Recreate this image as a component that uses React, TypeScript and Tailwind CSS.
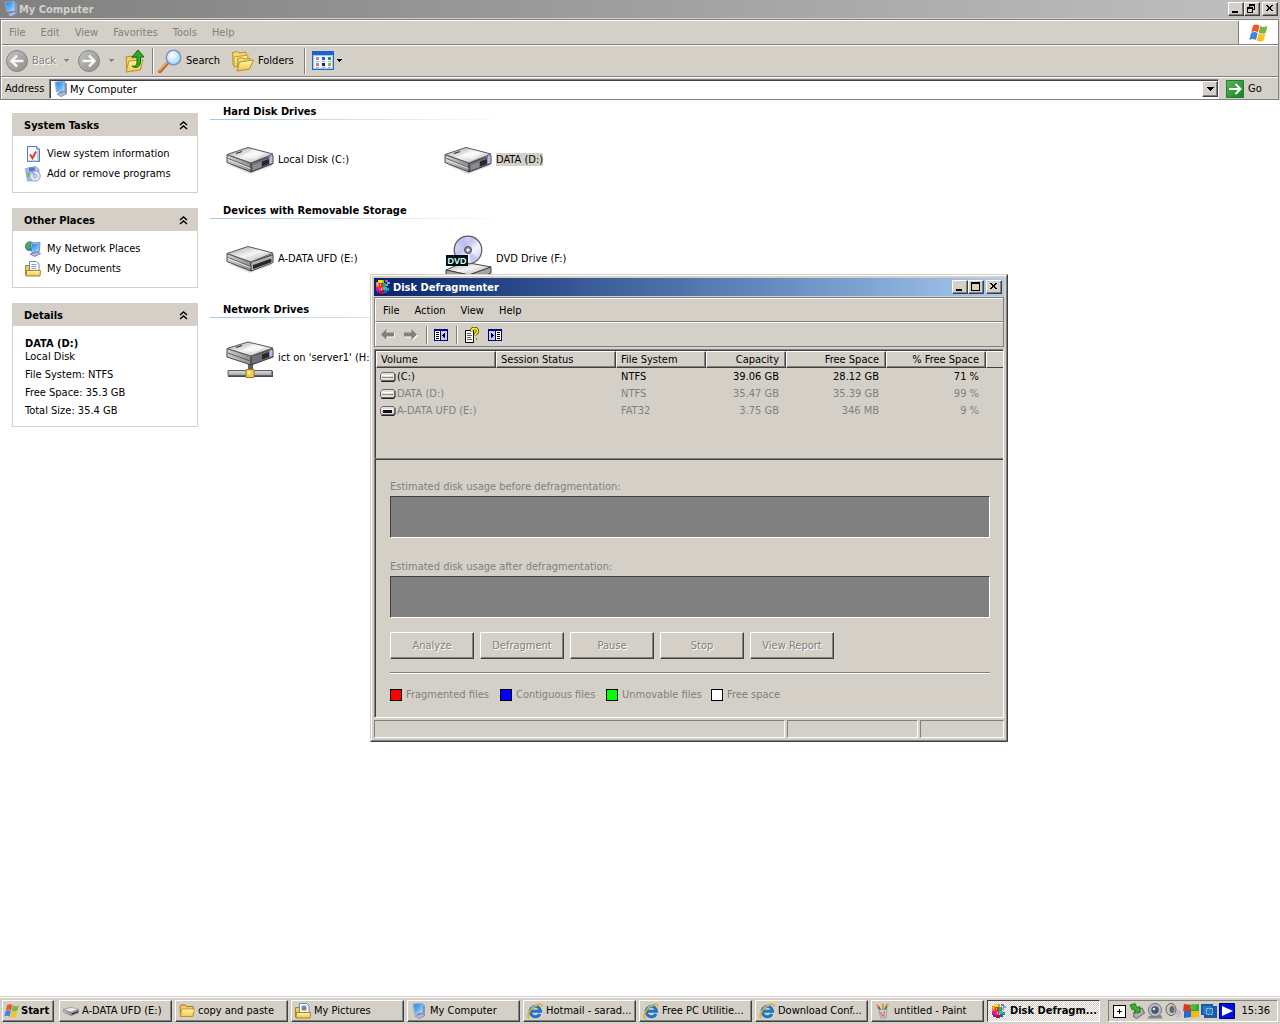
import React from "react";
import clsx from "clsx";

const raised =
  "border border-t-white border-l-white border-b-[#404040] border-r-[#404040] bg-[#d4d0c8] shadow-[inset_-1px_-1px_0_#808080]";
const sunken = "border border-t-[#808080] border-l-[#808080] border-b-white border-r-white";
const disabledText = "text-[#808080] [text-shadow:1px_1px_0_#fff]";

interface IconProps {
  className?: string;
}

const Gradients = () => (
  <svg className="absolute h-0 w-0" aria-hidden="true">
    <defs>
      <linearGradient id="driveTop" x1="0" y1="0" x2="1" y2="1">
        <stop offset="0" stopColor="#a0a0a0" />
        <stop offset="0.5" stopColor="#f4f4f4" />
        <stop offset="1" stopColor="#a8a8a8" />
      </linearGradient>
      <linearGradient id="driveSide" x1="0" y1="0" x2="1" y2="0">
        <stop offset="0" stopColor="#d0d0d0" />
        <stop offset="1" stopColor="#8c8c8c" />
      </linearGradient>
      <linearGradient id="screen" x1="0" y1="0" x2="1" y2="1">
        <stop offset="0" stopColor="#2c7cdc" />
        <stop offset="0.6" stopColor="#60b4f8" />
        <stop offset="1" stopColor="#b4e0ff" />
      </linearGradient>
      <linearGradient id="folder" x1="0" y1="0" x2="0" y2="1">
        <stop offset="0" stopColor="#fff6b0" />
        <stop offset="1" stopColor="#f0c648" />
      </linearGradient>
      <linearGradient id="disc" x1="0" y1="0" x2="1" y2="1">
        <stop offset="0" stopColor="#e4e4f4" />
        <stop offset="0.4" stopColor="#c4c4f0" />
        <stop offset="0.6" stopColor="#f4f4ff" />
        <stop offset="1" stopColor="#c8c0e4" />
      </linearGradient>
      <linearGradient id="nav" x1="0" y1="0" x2="1" y2="1">
        <stop offset="0" stopColor="#c4c4c4" />
        <stop offset="1" stopColor="#8c8c8c" />
      </linearGradient>
      <linearGradient id="go" x1="0" y1="0" x2="1" y2="1">
        <stop offset="0" stopColor="#58b858" />
        <stop offset="1" stopColor="#148020" />
      </linearGradient>
      <radialGradient id="lens" cx="0.4" cy="0.35" r="0.7">
        <stop offset="0" stopColor="#ffffff" />
        <stop offset="1" stopColor="#a0d4fc" />
      </radialGradient>
    </defs>
  </svg>
);

const ComputerIcon = ({ className = "h-4 w-4" }: IconProps) => (
  <svg viewBox="0 0 16 16" className={clsx("shrink-0", className)} aria-hidden="true">
    <path d="M11 1l3 1.500v10L11.500 14z" fill="#8c98b8" />
    <path d="M2 1L11.500 0l.5 10L3.500 11z" fill="#b4ccf4" stroke="#7088bc" strokeWidth="0.600" />
    <path d="M3 1.500l7.500-.7.500 8.200-7 1z" fill="url(#screen)" />
    <path d="M6 11l4-1 1 2-4 1z" fill="#7080a4" />
    <path d="M4 13l7-2.500 3 2L8 15.700z" fill="#b0b8d4" stroke="#6878a0" strokeWidth="0.600" />
  </svg>
);

const FlagIcon = ({ className = "h-4 w-4" }: IconProps) => (
  <svg viewBox="0 0 20 20" className={clsx("shrink-0", className)} aria-hidden="true">
    <path d="M4 2.500c2-1.300 4-1.300 6.500 0L9 9.300C6.500 8 4.500 8 2.300 9.300z" fill="#ec5828" />
    <path d="M11.200 3c2.500 1.300 4.500 1.300 7.300 0l-1.700 6.800c-2.500 1.300-4.800 1.300-7.100 0z" fill="#78b83c" />
    <path d="M2 10c2.300-1.300 4.300-1.300 6.700 0L7 17c-2.500-1.300-4.500-1.300-6.700 0z" fill="#4484e0" />
    <path d="M9.500 10.500c2.500 1.300 4.500 1.300 7 0l-1.700 7c-2.500 1.300-4.800 1.300-7 0z" fill="#f8c020" />
  </svg>
);

const FolderIcon = ({ className = "h-4 w-4" }: IconProps) => (
  <svg viewBox="0 0 16 16" className={clsx("shrink-0", className)} aria-hidden="true">
    <path d="M1 3.500l1-1.500h4l1.500 1.500H14V13H1.500z" fill="#f0cc58" stroke="#a87c14" />
    <path d="M3 6h12.500l-1.700 7.500H1.200z" fill="url(#folder)" stroke="#b88c1c" strokeWidth="0.800" />
  </svg>
);

const PicturesIcon = ({ documents = false }: { documents?: boolean }) => (
  <svg viewBox="0 0 16 16" className="h-4 w-4 shrink-0" aria-hidden="true">
    <path d="M.5 4.500h5V14h-5z" fill="#f0c858" stroke="#a8802c" />
    <path d="M4.500.5h7L14 3v9H4.500z" fill="#fff" stroke="#7088b8" />
    {documents ? (
      <path d="M6.500 3.500h5m-5 2h5m-5 2h5" stroke="#88a0d0" />
    ) : (
      <>
        <path d="M6.500 2.500h5v5h-5z" fill="#58a8e8" />
        <circle cx="9" cy="5.500" r="1.700" fill="#e05838" />
      </>
    )}
    <path d="M1.500 9.500H15.500L15 15H1z" fill="url(#folder)" stroke="#a8802c" />
  </svg>
);

const ExplorerIcon = () => (
  <svg viewBox="0 0 16 16" className="h-4 w-4 shrink-0" aria-hidden="true">
    <path
      d="M13 11A5.200 5.200 0 1 1 13.600 8.300H4.500"
      fill="none"
      stroke="#1c74c8"
      strokeWidth="3"
    />
    <path d="M4.200 6A4.800 4.800 0 0 1 10 3.500" fill="none" stroke="#68bcf4" strokeWidth="1.200" />
    <path
      d="M3 15C-.5 15 1 9.500 5.500 5S15.500 0 14.800 3.500"
      fill="none"
      stroke="#e8b020"
      strokeWidth="1.700"
    />
  </svg>
);

const PaintIcon = () => (
  <svg viewBox="0 0 16 16" className="h-4 w-4 shrink-0" aria-hidden="true">
    <path d="M6 8L2.500 2.500" stroke="#c03c28" strokeWidth="2" />
    <path d="M8 8V1" stroke="#d89c2c" strokeWidth="2" />
    <path d="M9.500 8l3-6.500" stroke="#308c40" strokeWidth="2" />
    <path d="M1.500 1.500l2 2M12 3.500l1.500-3" stroke="#e8a070" strokeWidth="1.800" />
    <path d="M4 6.500h8L11 15H5.500z" fill="#c8d4dc" stroke="#8494a0" strokeWidth="0.800" />
    <path d="M5.500 9l2 4m2-5l-1 6" stroke="#e46848" strokeWidth="1.300" />
  </svg>
);

const DefragIcon = () => (
  <svg viewBox="0 0 16 16" className="h-4 w-4 shrink-0" shapeRendering="crispEdges" aria-hidden="true">
    <path d="M3 1h4v3H3z" fill="#f4e020" />
    <path d="M1 3h3v5H1z" fill="#f08018" />
    <path d="M7 1h2v3H7z" fill="#78d028" />
    <path d="M4 4h4v4H4z" fill="#e82828" />
    <path d="M1 8h3v4H1z" fill="#d818a0" />
    <path d="M2 11h3v3H2z" fill="#7c20c8" />
    <path d="M4 8h4v4H4z" fill="#f83848" />
    <path d="M8 4h3v4H8z" fill="#18b848" />
    <path d="M8 8h4v3H8z" fill="#18c8c8" />
    <path d="M5 12h4v3H5z" fill="#c01028" />
    <path d="M9 11h3v3H9z" fill="#3050f0" />
    <path d="M12 9h2v3h-2z" fill="#20a848" />
    <path d="M10 1h3v2h-3z" fill="#e83cc8" />
    <path d="M12 3h3v2h-3z" fill="#48b8f8" />
    <path d="M11 5h2v2h-2z" fill="#c878f8" />
    <path d="M2 4h1v2H2zM5 5h1v2H5zM6 9h1v2H6z" fill="#fff" opacity="0.600" />
  </svg>
);

const SysInfoIcon = () => (
  <svg viewBox="0 0 16 16" className="h-4 w-4 shrink-0" aria-hidden="true">
    <path d="M2.500.5h9L14.500 3v12.500h-12z" fill="#f4f8ff" stroke="#5878b0" />
    <path d="M13 3v12H3" fill="none" stroke="#90acdc" />
    <path d="M11.500.5V3h3" fill="#c0d4f4" stroke="#5878b0" strokeWidth="0.800" />
    <path d="M5 8.500l2.500 3.500L11 5.500" fill="none" stroke="#e03c20" strokeWidth="2" />
  </svg>
);

const ProgramsIcon = () => (
  <svg viewBox="0 0 16 16" className="h-4 w-4 shrink-0" aria-hidden="true">
    <path d="M.5 2.500L11 .5l3 3L13 14 2.500 15z" fill="#b4c4e0" stroke="#7c90b8" strokeWidth="0.800" />
    <path d="M4 1.500h6v4H4z" fill="#3c84d0" />
    <path d="M2 5l3 3-2 5z" fill="#68b850" />
    <circle cx="10" cy="10" r="5.300" fill="#dce4f8" stroke="#8894b8" strokeWidth="0.800" />
    <path d="M10 10L6 7a5 5 0 0 1 3-2z" fill="#a8a4f0" />
    <circle cx="10" cy="10" r="1.500" fill="#fff" stroke="#7884a0" strokeWidth="0.800" />
  </svg>
);

const NetworkIcon = () => (
  <svg viewBox="0 0 16 16" className="h-4 w-4 shrink-0" aria-hidden="true">
    <circle cx="4.800" cy="5.300" r="4.800" fill="#3070d0" />
    <path d="M1 3c1-2 4-3 5-2L5 4l1 2-2 3C2 8 .5 6 1 3z" fill="#48b040" />
    <path d="M5.500 2l9.500-.5-.7 9L7 11.500z" fill="#c4d8f8" stroke="#5870b0" strokeWidth="0.800" />
    <path d="M6.500 3l7.700-.6-.6 7.300L7.800 10.500z" fill="url(#screen)" />
    <path d="M5 13l7-2 3.500 1.500-6 3z" fill="#b4bcd4" stroke="#6070a0" strokeWidth="0.800" />
  </svg>
);

const HardDrive = ({ className = "h-12 w-12", usb = false }: IconProps & { usb?: boolean }) => (
  <svg viewBox="0 0 48 48" className={clsx("shrink-0", className)} aria-hidden="true">
    <path d="M3 30l21 9 22-8v-3z" fill="#000" opacity="0.150" />
    <path d="M1 19.500L25 28v9L1 27.500z" fill="url(#driveSide)" stroke="#484848" />
    <path d="M25 28l22-7.500v8L25 37z" fill="#707078" stroke="#383838" />
    <path d="M1 19.500L22 12.500l25 6.500-22 9z" fill="url(#driveTop)" stroke="#585858" />
    <path d="M2 23.500l22.500 9" stroke="#606060" />
    <path d="M2 24.500l22.500 9" stroke="#f4f4f4" strokeWidth="0.800" />
    {usb ? (
      <>
        <path d="M25.500 28.500l21-7v7l-21 8z" fill="#b0b0b0" />
        <path d="M27 31l17-6c2-.5 2 3 0 3.800L27 35z" fill="#282828" />
      </>
    ) : (
      <>
        <path d="M36 26.500l7-2.500v5l-7 2.500z" fill="#282828" />
        <path d="M43.500 21.500l3-1v7.500l-3 1z" fill="#b8b8ec" />
        <path d="M27 30l8-3v5l-8 3z" fill="#8c8c94" />
        <path d="M10 18.500l6-2" stroke="#303030" strokeWidth="1.200" />
        <path d="M16 20.500l11-6 12 4-11 6z" fill="#fff" opacity="0.500" />
      </>
    )}
  </svg>
);

const NetworkDrive = () => (
  <svg viewBox="0 0 48 48" className="h-12 w-12 shrink-0" aria-hidden="true">
    <path d="M22 29h5v9h-5z" fill="#606060" />
    <path d="M2 38h45v6H2z" fill="#484848" />
    <path d="M2 37.500h44v5H2z" fill="#b0b4bc" stroke="#606060" />
    <path d="M3 39h42" stroke="#e8ecf0" />
    <path d="M20 36.500h8v8h-8z" fill="#f4cc50" stroke="#a87818" />
    <path d="M21.500 38h3v3h-3z" fill="#fff0a8" />
    <path d="M1 15.500L25 23v9L1 24z" fill="url(#driveSide)" stroke="#484848" />
    <path d="M25 23l22-7v8l-22 8z" fill="#707078" stroke="#383838" />
    <path d="M1 15.500L22 9l25 6-22 8z" fill="url(#driveTop)" stroke="#585858" />
    <path d="M2 20l22.500 8" stroke="#606060" />
    <path d="M36 21.500l7-2.500v5l-7 2.500z" fill="#282828" />
    <path d="M43.500 17.500l3-1V23l-3 1z" fill="#b8b8ec" />
    <path d="M10 14.500l6-2" stroke="#303030" strokeWidth="1.200" />
    <path d="M17 16.500l10-5.500 12 3.500-11 5.500z" fill="#fff" opacity="0.500" />
  </svg>
);

const DvdDrive = () => (
  <svg viewBox="0 0 48 48" className="h-12 w-12 shrink-0" aria-hidden="true">
    <path d="M2 36l18-8 27 5-22 8z" fill="url(#driveTop)" stroke="#484848" />
    <path d="M2 36l23 5v6L2 43zM25 41l22-8v6l-22 8z" fill="#a4a4a4" stroke="#404040" />
    <circle cx="24" cy="16" r="13.800" fill="url(#disc)" stroke="#585858" strokeWidth="1.200" />
    <path d="M24 16L13 9a13 13 0 0 1 9-6zM24 16l10 8a13 13 0 0 1-7 5z" fill="#b8b4f8" opacity="0.600" />
    <circle cx="24" cy="16" r="3.500" fill="#888898" stroke="#484858" />
    <circle cx="24" cy="16" r="1.500" fill="#fff" />
    <path d="M2 21h22v11H2z" fill="#001010" />
    <text x="13" y="30" textAnchor="middle" fontSize="9" fontWeight="bold" fill="#d8ffff" fontFamily="Liberation Sans, sans-serif">
      DVD
    </text>
  </svg>
);

const NavIcon = ({ forward = false }: { forward?: boolean }) => (
  <svg viewBox="0 0 24 24" className="h-6 w-6 shrink-0" aria-hidden="true">
    <circle cx="12" cy="12" r="10.500" fill="url(#nav)" stroke="#848484" />
    <path
      d={forward ? "M5.500 12h11M12 6.500l5.500 5.500-5.500 5.500" : "M18.500 12h-11M12 6.500L6.500 12l5.500 5.500"}
      fill="none"
      stroke="#f4f4f0"
      strokeWidth="2.500"
    />
  </svg>
);

const UpIcon = () => (
  <svg viewBox="0 0 22 24" className="h-6 w-[22px] shrink-0" aria-hidden="true">
    <path d="M2 8l5-1 1 2 8-1 1 12-14 2z" fill="#f0d060" stroke="#b08c28" />
    <path d="M5 12l14-1-3 10-14 2z" fill="url(#folder)" stroke="#b8942c" />
    <path d="M8 17c3 1 5-1 5-4V8H8L14 1l6 7h-3.500v5c0 5-5 7-8.500 4z" fill="#30a828" stroke="#146c14" />
  </svg>
);

const SearchIcon = () => (
  <svg viewBox="0 0 24 24" className="h-6 w-6 shrink-0" aria-hidden="true">
    <path d="M1.800 22.500L9 14.500" stroke="#b46428" strokeWidth="3.500" strokeLinecap="round" />
    <path d="M1.500 21.500L8.500 14" stroke="#f8a860" strokeWidth="1.800" strokeLinecap="round" />
    <circle cx="15.500" cy="8.500" r="7.200" fill="url(#lens)" stroke="#7898c8" strokeWidth="1.600" />
  </svg>
);

const FoldersIcon = () => (
  <svg viewBox="0 0 24 24" className="h-6 w-6 shrink-0" aria-hidden="true">
    <path d="M1.500 3.500l5-1L8 4l7-1v11l-13 2z" fill="#f4d870" stroke="#b8942c" />
    <path d="M3 8l14-2-1 9-13 3z" fill="url(#folder)" stroke="#c09c34" />
    <path d="M6.500 9.500l5-1L13 10l6-.5v10l-12 2z" fill="#f4d870" stroke="#b8942c" />
    <path d="M8.500 13l14-2-4 9-12.500 2z" fill="url(#folder)" stroke="#b8942c" />
  </svg>
);

const ViewsIcon = () => (
  <svg viewBox="0 0 24 20" className="h-5 w-6 shrink-0" shapeRendering="crispEdges" aria-hidden="true">
    <path d="M1.500.5h21v18h-21z" fill="#f4f8ff" stroke="#2068c0" />
    <path d="M2.500 4.500h19v13h-19z" fill="none" stroke="#a8c8f0" />
    <path d="M1 0h22v4H1z" fill="#1c64cc" />
    <path d="M5 6h3v3H5z" fill="#a090c8" />
    <path d="M11 6h3v3h-3z" fill="#2060d8" />
    <path d="M17 6h3v3h-3z" fill="#309830" />
    <path d="M5 12h3v3H5z" fill="#e08060" />
    <path d="M11 12h3v3h-3z" fill="#102870" />
    <path d="M17 12h3v3h-3z" fill="#c0a028" />
    <path d="M5 10.500h3M11 10.500h3M17 10.500h3M5 16.500h3M11 16.500h3M17 16.500h3" stroke="#90b0d8" />
  </svg>
);

const Caret = ({ className = "text-black" }: IconProps) => (
  <svg viewBox="0 0 7 4" className={clsx("h-1 w-[7px] shrink-0", className)} shapeRendering="crispEdges" aria-hidden="true">
    <path d="M0 0h7v1H0zM1 1h5v1H1zM2 2h3v1H2zM3 3h1v1H3z" fill="currentColor" />
  </svg>
);

const SmallCaret = ({ className = "text-black" }: IconProps) => (
  <svg viewBox="0 0 6 4" className={clsx("h-1 w-[6px] shrink-0", className)} shapeRendering="crispEdges" aria-hidden="true">
    <path d="M0 0h5v1H0zM1 1h3v1H1zM2 2h1v1H2z" fill="currentColor" />
  </svg>
);

const glyphs = {
  minimize: "M3 8h6v2H3z",
  maximize: "M2 1h9v9H2zM3 3v6h7V3z",
  restore: "M4 1h6v6H8v3H2V4h2zM5 3v1h3v2h1V3zM3 6v3h4V6z",
  close:
    "M3 2h2v1H3zM8 2h2v1H8zM4 3h2v1H4zM7 3h2v1H7zM5 4h3v1H5zM5 5h3v1H5zM4 6h2v1H4zM7 6h2v1H7zM3 7h2v1H3zM8 7h2v1H8z",
};

const CaptionButton = ({ glyph }: { glyph: keyof typeof glyphs }) => (
  <button aria-label={glyph} className={clsx(raised, "flex h-[14px] w-4 items-center justify-center")}>
    <svg viewBox="0 0 14 12" className="h-3 w-[14px] shrink-0" shapeRendering="crispEdges" aria-hidden="true">
      <path d={glyphs[glyph]} fillRule="evenodd" />
    </svg>
  </button>
);

const Separator = ({ className }: IconProps) => (
  <div className={clsx("w-[2px] border-l border-r border-l-[#808080] border-r-white", className)} />
);

const browserMenu = ["File", "Edit", "View", "Favorites", "Tools", "Help"];

const BrowserChrome = () => (
  <header className="bg-[#d4d0c8]">
    <div className="flex h-[18px] items-center bg-linear-to-r from-[#808080] to-[#c0c0c0] pr-[2px] pl-[3px]">
      <ComputerIcon />
      <h1 className="grow pt-px text-[11px] font-bold text-[#d4d0c8]">My Computer</h1>
      <CaptionButton glyph="minimize" />
      <CaptionButton glyph="restore" />
      <div className="w-[2px]" />
      <CaptionButton glyph="close" />
    </div>
    <div className="mt-px mr-px border border-[#808080]">
      <nav className="flex h-[25px] items-stretch border-t border-l border-white">
        <div className="flex grow items-center gap-[15px] border-b border-[#808080] pl-[7px] text-[#808080]">
          {browserMenu.map((item) => (
            <button key={item}>{item}</button>
          ))}
        </div>
        <div className="flex w-10 items-center justify-center border-b border-l border-[#808080] bg-white">
          <FlagIcon className="h-5 w-5" />
        </div>
      </nav>
      <div className="flex h-8 items-center border-t border-l border-b border-t-white border-l-white border-b-[#808080] pl-[3px]">
        <button className={clsx("flex w-[50px] items-center gap-[3px]", disabledText)}>
          <NavIcon />
          Back
        </button>
        <button aria-label="Back history" className="ml-[9px]">
          <SmallCaret className="text-[#808080]" />
        </button>
        <button aria-label="Forward" className="ml-[7px]">
          <NavIcon forward />
        </button>
        <button aria-label="Forward history" className="ml-2">
          <SmallCaret className="text-[#808080]" />
        </button>
        <button aria-label="Up" className="ml-[9px]">
          <UpIcon />
        </button>
        <Separator className="ml-[6px] h-[26px]" />
        <button className="ml-1 flex w-[62px] items-center gap-1">
          <SearchIcon />
          Search
        </button>
        <button className="ml-[11px] flex w-[66px] items-center gap-[3px]">
          <FoldersIcon />
          Folders
        </button>
        <Separator className="ml-[7px] h-[26px]" />
        <button aria-label="Views" className="ml-[5px] flex items-center gap-[2px]">
          <ViewsIcon />
          <SmallCaret />
        </button>
      </div>
      <div className="flex h-[22px] items-center border-t border-l border-white pl-[3px]">
        <label htmlFor="address" className="w-[44px]">
          Address
        </label>
        <div className="flex h-5 grow items-center border border-[#808080] border-r-white border-b-white bg-white pl-[3px] shadow-[inset_1px_1px_0_#404040]">
          <ComputerIcon />
          <input id="address" defaultValue="My Computer" className="h-4 grow pt-px pl-px outline-none" />
          <button aria-label="Address history" className={clsx(raised, "mt-px flex h-4 w-4 items-center justify-center")}>
            <Caret />
          </button>
        </div>
        <button className="flex w-[59px] items-center gap-1 pl-[7px]">
          <svg viewBox="0 0 18 18" className="h-[18px] w-[18px] shrink-0" aria-hidden="true">
            <path d="M.5.5h17v17H.5z" fill="url(#go)" stroke="#287c30" />
            <path d="M3 9h11M9.500 4l5 5-5 5" fill="none" stroke="#fff" strokeWidth="2" />
          </svg>
          Go
        </button>
      </div>
    </div>
  </header>
);

interface TaskPanelProps {
  title: string;
  className?: string;
  children: React.ReactNode;
}

const TaskPanel = ({ title, className, children }: TaskPanelProps) => (
  <section className="border border-[#d4d0c8]">
    <div className="flex h-[22px] items-center justify-between bg-[#d4d0c8] pr-[9px] pl-[11px]">
      <h2 className="pt-[2px] font-bold">{title}</h2>
      <button aria-label={`Collapse ${title}`}>
        <svg viewBox="0 0 9 9" className="h-[9px] w-[9px]" aria-hidden="true">
          <path d="M1 4l3.500-3L8 4M1 8l3.500-3L8 8" fill="none" stroke="#000" strokeWidth="1.400" />
        </svg>
      </button>
    </div>
    <div className={clsx("px-3", className)}>{children}</div>
  </section>
);

interface TaskLinkProps {
  icon: React.ReactNode;
  label: string;
}

const TaskLink = ({ icon, label }: TaskLinkProps) => (
  <a href="#" className="flex h-5 items-center gap-[6px]">
    {icon}
    {label}
  </a>
);

const Sidebar = () => (
  <aside className="flex w-[186px] shrink-0 flex-col gap-[15px] pt-[13px]">
    <TaskPanel title="System Tasks" className="h-14 pt-2">
      <TaskLink icon={<SysInfoIcon />} label="View system information" />
      <TaskLink icon={<ProgramsIcon />} label="Add or remove programs" />
    </TaskPanel>
    <TaskPanel title="Other Places" className="h-14 pt-2">
      <TaskLink icon={<NetworkIcon />} label="My Network Places" />
      <TaskLink icon={<PicturesIcon documents />} label="My Documents" />
    </TaskPanel>
    <TaskPanel title="Details" className="pt-[11px] pb-[6px]">
      <p className="leading-[14px] font-bold">DATA (D:)</p>
      <p className="leading-[12px]">Local Disk</p>
      <p className="pt-[3px] leading-[18px]">File System: NTFS</p>
      <p className="leading-[18px]">Free Space: 35.3 GB</p>
      <p className="leading-[18px]">Total Size: 35.4 GB</p>
    </TaskPanel>
  </aside>
);

interface Drive {
  name: string;
  icon: React.ReactNode;
  selected?: boolean;
}

const driveGroups: { title: string; drives: Drive[] }[] = [
  {
    title: "Hard Disk Drives",
    drives: [
      { name: "Local Disk (C:)", icon: <HardDrive /> },
      { name: "DATA (D:)", icon: <HardDrive />, selected: true },
    ],
  },
  {
    title: "Devices with Removable Storage",
    drives: [
      { name: "A-DATA UFD (E:)", icon: <HardDrive usb /> },
      { name: "DVD Drive (F:)", icon: <DvdDrive /> },
    ],
  },
  {
    title: "Network Drives",
    drives: [{ name: "ict on 'server1' (H:)", icon: <NetworkDrive /> }],
  },
];

const DriveList = () => (
  <main className="grow pl-3">
    {driveGroups.map((group) => (
      <section key={group.title} className="h-[99px]">
        <h2 className="h-[19px] pt-[5px] pl-[13px] font-bold">{group.title}</h2>
        <div className="h-px w-[300px] bg-linear-to-r from-[#a0c8e4] to-white" />
        <div className="flex pt-[15px] pl-4">
          {group.drives.map((drive) => (
            <button key={drive.name} className="flex w-[218px] items-center gap-1">
              {drive.icon}
              <span className={clsx("leading-[13px]", drive.selected && "bg-[#d4d0c8]")}>{drive.name}</span>
            </button>
          ))}
        </div>
      </section>
    ))}
  </main>
);

const VolumeIcon = ({ removable = false }: { removable?: boolean }) => (
  <svg viewBox="0 0 16 10" className="h-[10px] w-4 shrink-0" aria-hidden="true">
    <path d="M2 2h13v6l-1 1.500H1.500" fill="#303030" stroke="#202020" />
    <path d="M2.500.5h11l1 1.500v5l-1 1.500h-12L.5 7V2.500z" fill="#e0e0e0" stroke="#686868" />
    <path d="M2 3.500h11" stroke="#fff" />
    {removable ? (
      <>
        <path d="M3 4h9v3H3z" fill="#101010" />
        <path d="M2 5h2v1H2z" fill="#e02020" />
      </>
    ) : (
      <>
        <path d="M2 5.500h9" stroke="#909090" />
        <path d="M11 5h2v1h-2z" fill="#20a020" />
      </>
    )}
  </svg>
);

const columns = [
  { label: "Volume", width: "w-[120px]", right: false },
  { label: "Session Status", width: "w-[120px]", right: false },
  { label: "File System", width: "w-[90px]", right: false },
  { label: "Capacity", width: "w-[80px]", right: true },
  { label: "Free Space", width: "w-[100px]", right: true },
  { label: "% Free Space", width: "w-[100px]", right: true },
  { label: "", width: "", right: false },
];

const volumes = [
  { name: "(C:)", fs: "NTFS", capacity: "39.06 GB", free: "28.12 GB", percent: "71 %", active: true },
  { name: "DATA (D:)", fs: "NTFS", capacity: "35.47 GB", free: "35.39 GB", percent: "99 %", active: false },
  { name: "A-DATA UFD (E:)", fs: "FAT32", capacity: "3.75 GB", free: "346 MB", percent: "9 %", active: false },
];

const VolumeTable = () => (
  <div className="h-[109px] border-t border-l border-[#404040]">
    <table className="w-full table-fixed border-separate border-spacing-0 text-left">
      <thead>
        <tr>
          {columns.map((col) => (
            <th
              key={col.label}
              className={clsx(
                "h-[17px] border-t border-l border-b border-t-white border-l-white border-b-[#404040] pt-px pr-[6px] pb-0 pl-1 font-normal",
                col.width,
                col.right && "text-right",
                col.label && "border-r border-r-[#404040] shadow-[inset_-1px_-1px_0_#808080]"
              )}
            >
              {col.label}
            </th>
          ))}
        </tr>
      </thead>
      <tbody>
        {volumes.map((volume) => (
          <tr key={volume.name} className={clsx("h-[17px]", !volume.active && "text-[#808080]")}>
            <td className="pt-px pb-0 pl-1">
              <span className="flex items-center gap-px whitespace-nowrap">
                <VolumeIcon removable={volume.fs === "FAT32"} />
                {volume.name}
              </span>
            </td>
            <td />
            <td className="pt-px pb-0 pl-[5px]">{volume.fs}</td>
            <td className="pt-px pr-[7px] pb-0 text-right">{volume.capacity}</td>
            <td className="pt-px pr-[7px] pb-0 text-right">{volume.free}</td>
            <td className="pt-px pr-[7px] pb-0 text-right">{volume.percent}</td>
            <td />
          </tr>
        ))}
      </tbody>
    </table>
  </div>
);

const legend = [
  { label: "Fragmented files", color: "bg-[#ff0000]", width: "w-[110px]" },
  { label: "Contiguous files", color: "bg-[#0000ff]", width: "w-[106px]" },
  { label: "Unmovable files", color: "bg-[#00ff00]", width: "w-[105px]" },
  { label: "Free space", color: "bg-white", width: "w-[105px]" },
];

const actions = ["Analyze", "Defragment", "Pause", "Stop", "View Report"];

const UsageBar = ({ label }: { label: string }) => (
  <div>
    <p className="h-4 leading-[13px] text-[#808080]">{label}</p>
    <div className="h-[42px] border border-t-[#404040] border-r-white border-b-white border-l-[#404040] bg-[#808080]" />
  </div>
);

const ConsoleToolbar = () => (
  <div className="flex h-6 items-center border-t border-l border-white pl-[5px]">
    <button aria-label="Back">
      <svg viewBox="0 0 14 11" className="h-[11px] w-[14px]" aria-hidden="true">
        <path d="M1 6.500L6.500 1v3.500H14v4H6.500V12z" fill="#fff" />
        <path d="M0 5.500L5.500 0v3.500H13v4H5.500V11z" fill="#808080" />
      </svg>
    </button>
    <button aria-label="Forward" className="ml-[9px]">
      <svg viewBox="0 0 14 11" className="h-[11px] w-[14px]" aria-hidden="true">
        <path d="M14 6.500L8.500 1v3.500H1v4h7.500V12z" fill="#fff" />
        <path d="M13 5.500L7.500 0v3.500H0v4h7.500V11z" fill="#808080" />
      </svg>
    </button>
    <Separator className="ml-2 h-[18px]" />
    <button aria-label="Console tree" className="ml-[6px]">
      <svg viewBox="0 0 14 12" className="h-3 w-[14px]" shapeRendering="crispEdges" aria-hidden="true">
        <path d="M0 0h14v12H0z" fill="#000080" />
        <path d="M1 2h5v9H1z" fill="#fff" />
        <path d="M7 2h6v9H7z" fill="#c8c8f0" />
        <path d="M2 3h3v1H2zM2 5h3v1H2zM2 7h3v1H2zM2 9h3v1H2zM11 4v5L8 6.500z" />
      </svg>
    </button>
    <Separator className="ml-2 h-[18px]" />
    <button aria-label="Help" className="ml-[6px]">
      <svg viewBox="0 0 16 16" className="h-4 w-4" aria-hidden="true">
        <path d="M1.500 3.500h8v12h-8z" fill="#fff" stroke="#000" />
        <path d="M3 6.500h4m-4 2h5m-5 2h4m-4 2h5" stroke="#606060" />
        <path d="M7.500 4.500c0-4 6-4 6-.5 0 2.500-2.500 2-2.500 4.500M11 11v2" fill="none" stroke="#303000" strokeWidth="3.200" />
        <path d="M7.500 4.500c0-4 6-4 6-.5 0 2.500-2.500 2-2.500 4.500M11 11v2" fill="none" stroke="#f8f020" strokeWidth="2" />
      </svg>
    </button>
    <button aria-label="Action pane" className="ml-2">
      <svg viewBox="0 0 14 12" className="h-3 w-[14px]" shapeRendering="crispEdges" aria-hidden="true">
        <path d="M0 0h14v12H0z" fill="#000080" />
        <path d="M1 2h6v9H1z" fill="#c8c8f0" />
        <path d="M8 2h5v9H8z" fill="#fff" />
        <path d="M9 3h3v1H9zM9 5h3v1H9zM9 7h3v1H9zM9 9h3v1H9zM3 4v5l3-2.500z" />
      </svg>
    </button>
  </div>
);

const DefragWindow = () => (
  <div
    role="dialog"
    aria-label="Disk Defragmenter"
    className="absolute top-[274px] left-[370px] w-[638px] border border-t-[#d4d0c8] border-r-[#404040] border-b-[#404040] border-l-[#d4d0c8] bg-[#d4d0c8]"
  >
    <div className="border border-t-white border-r-[#808080] border-b-[#808080] border-l-white p-[2px]">
      <div className="flex h-[18px] items-center bg-linear-to-r from-[#0a246a] to-[#a6caf0] pr-[2px] pl-px">
        <DefragIcon />
        <h2 className="grow pt-px pl-[2px] font-bold text-white">Disk Defragmenter</h2>
        <CaptionButton glyph="minimize" />
        <CaptionButton glyph="maximize" />
        <div className="w-[2px]" />
        <CaptionButton glyph="close" />
      </div>
      <div className="mt-px border border-[#808080]">
        <nav className="flex h-6 items-center gap-[15px] border-t border-l border-b border-t-white border-l-white border-b-[#808080] pt-px pl-[7px]">
          {["File", "Action", "View", "Help"].map((item) => (
            <button key={item}>{item}</button>
          ))}
        </nav>
        <ConsoleToolbar />
      </div>
      <div className="mt-[2px] border border-t-[#808080] border-r-white border-b-white border-l-[#808080]">
        <VolumeTable />
        <div className="border-t border-l border-t-[#404040] border-l-[#404040] pt-5 pr-[13px] pb-[15px] pl-[14px] shadow-[0_-1px_0_#808080]">
          <div className="flex flex-col gap-[22px]">
            <UsageBar label="Estimated disk usage before defragmentation:" />
            <UsageBar label="Estimated disk usage after defragmentation:" />
          </div>
          <div className="mt-[14px] flex gap-[6px]">
            {actions.map((action) => (
              <button key={action} disabled className={clsx(raised, disabledText, "h-[27px] w-[84px]")}>
                {action}
              </button>
            ))}
          </div>
          <div className="mt-[13px] h-[2px] border-t border-b border-t-[#808080] border-b-white" />
          <ul className="mt-[14px] flex text-[#808080]">
            {legend.map((entry) => (
              <li key={entry.label} className={clsx("flex items-center gap-1", entry.width)}>
                <span className={clsx("h-3 w-3 border border-black", entry.color)} />
                {entry.label}
              </li>
            ))}
          </ul>
        </div>
      </div>
      <div className="mt-[2px] flex h-[18px] gap-[2px]">
        <div className={clsx(sunken, "grow")} />
        <div className={clsx(sunken, "w-[131px]")} />
        <div className={clsx(sunken, "w-[84px]")} />
      </div>
    </div>
  </div>
);

const tasks = [
  { label: "A-DATA UFD (E:)", icon: <HardDrive usb className="h-4 w-4" /> },
  { label: "copy and paste", icon: <FolderIcon /> },
  { label: "My Pictures", icon: <PicturesIcon /> },
  { label: "My Computer", icon: <ComputerIcon /> },
  { label: "Hotmail - sarad...", icon: <ExplorerIcon /> },
  { label: "Free PC Utilitie...", icon: <ExplorerIcon /> },
  { label: "Download Conf...", icon: <ExplorerIcon /> },
  { label: "untitled - Paint", icon: <PaintIcon /> },
  { label: "Disk Defragm...", icon: <DefragIcon />, active: true },
];

const TrayIcons = () => (
  <div className="flex items-center gap-[2px]">
    <svg viewBox="0 0 16 16" className="h-4 w-4" shapeRendering="crispEdges" aria-hidden="true">
      <path d="M2.500 2.500h12v12h-12z" fill="#fff" stroke="#000" />
      <path d="M6 8h5v1H6zM8 6h1v5H8z" />
    </svg>
    <svg viewBox="0 0 16 16" className="h-4 w-4" aria-hidden="true">
      <path d="M5 9l8-4 2.500 5-8 5.500-3-2z" fill="#b0b0b0" stroke="#606060" />
      <path d="M1 2l5-1.500 2 4 3-1v6L5 10l2-2.500-4-1z" fill="#38b030" stroke="#186c18" strokeWidth="0.800" />
    </svg>
    <svg viewBox="0 0 16 16" className="h-4 w-4" aria-hidden="true">
      <path d="M2 13l12-1 1.500 3.500H.5z" fill="#808890" />
      <circle cx="8" cy="7" r="6.500" fill="#b8bcc8" stroke="#707480" />
      <circle cx="8" cy="7" r="3.700" fill="#485468" />
      <circle cx="7" cy="6" r="1.300" fill="#e0e8f8" />
    </svg>
    <svg viewBox="0 0 16 16" className="h-4 w-4" aria-hidden="true">
      <ellipse cx="6" cy="6.500" rx="5" ry="6" fill="#c8c8c8" stroke="#606060" />
      <ellipse cx="7" cy="6.500" rx="2.500" ry="3.500" fill="#686868" />
      <path d="M10.500 12c2-1 2.500-3 2.500-5M12 14c2.500-1.500 3-4 3-6" fill="none" stroke="#9c9cdc" />
    </svg>
    <svg viewBox="0 0 16 16" className="h-4 w-4" aria-hidden="true">
      <path d="M1 1l7 1v6L0 8z" fill="#e03820" />
      <path d="M8 2l8-1v7H8z" fill="#38a830" />
      <path d="M1 8h7v6l-7 1z" fill="#2868d8" />
      <path d="M8 8h8v6l-8 1z" fill="#f0b818" />
      <circle cx="10" cy="4" r="3" fill="#50b838" />
    </svg>
    <svg viewBox="0 0 16 16" className="h-4 w-4" aria-hidden="true">
      <path d="M0 1h12v2h4v12H3v-3H0z" fill="#1c58a8" />
      <path d="M2 3h9v8H2z" fill="#2c78c8" />
      <path d="M5.500 5.500h6v6h-6z" fill="none" stroke="#a8d0f8" strokeDasharray="2 1" />
    </svg>
    <svg viewBox="0 0 16 16" className="h-4 w-4" aria-hidden="true">
      <path d="M.5.5h15v15H.5z" fill="#0010e0" stroke="#000060" />
      <path d="M3 3l11 5-11 5z" fill="#fff" />
    </svg>
  </div>
);

const Taskbar = () => (
  <footer className="flex h-7 items-center border-t border-[#d4d0c8] bg-[#d4d0c8] px-[2px] shadow-[inset_0_1px_0_#fff]">
    <button className={clsx(raised, "mt-px flex h-[22px] w-[52px] items-center gap-px pl-px font-bold")}>
      <FlagIcon />
      Start
    </button>
    <div className="mt-px ml-[5px] flex min-w-0 grow gap-[3px]">
      {tasks.map((task) => (
        <button
          key={task.label}
          className={clsx(
            "flex h-[22px] min-w-0 flex-1 items-center gap-[3px] overflow-hidden pl-[3px] whitespace-nowrap",
            task.active
              ? "border border-t-[#404040] border-r-white border-b-white border-l-[#404040] bg-[repeating-conic-gradient(#fff_0_25%,#d4d0c8_0_50%)] bg-[length:2px_2px] font-bold"
              : raised
          )}
        >
          {task.icon}
          {task.label}
        </button>
      ))}
    </div>
    <div className={clsx(sunken, "mt-px ml-2 flex h-[22px] w-[170px] items-center justify-between pr-[7px] pl-[2px]")}>
      <TrayIcons />
      <time>15:36</time>
    </div>
  </footer>
);

const App: React.FC = () => {
  return (
    <div className="relative flex min-h-screen cursor-default flex-col bg-white font-['DejaVu_Sans_Condensed','Noto_Sans',sans-serif] text-[11px] leading-[14px] text-black">
      <Gradients />
      <BrowserChrome />
      <div className="flex grow pl-3">
        <Sidebar />
        <DriveList />
      </div>
      <Taskbar />
      <DefragWindow />
    </div>
  );
};

export default App;
